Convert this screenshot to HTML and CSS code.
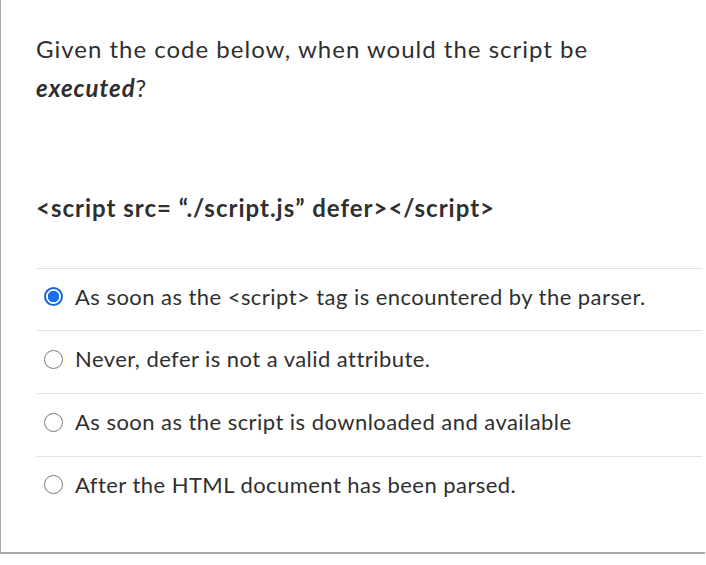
FILE: index.html
```html
<!DOCTYPE html>
<html>
<head>
<meta charset="utf-8">
<link rel="stylesheet" href="styles.css">
</head>
<body>
<div class="card">
  <p class="question">Given the code below, when would the script be <em class="strong-em">executed</em>?</p>
  <p class="code">&lt;script src= “./script.js” defer&gt;&lt;/script&gt;</p>
  <ul class="answers">
    <li class="answer"><span class="radio checked"></span><span class="label">As soon as the &lt;script&gt; tag is encountered by the parser.</span></li>
    <li class="answer"><span class="radio"></span><span class="label">Never, defer is not a valid attribute.</span></li>
    <li class="answer"><span class="radio"></span><span class="label">As soon as the script is downloaded and available</span></li>
    <li class="answer"><span class="radio"></span><span class="label">After the HTML document has been parsed.</span></li>
  </ul>
</div>
</body>
</html>
```

FILE: styles.css
```css
html, body {
  margin: 0;
  padding: 0;
  background: #fff;
}
body {
  font-family: Lato, "Liberation Sans", sans-serif;
  color: #2f2f2f;
}
.card {
  width: 705px;
  height: 554px;
  box-sizing: border-box;
  border-left: 1px solid #a8a8a8;
  border-bottom: 2px solid #a8a8a8;
  padding: 29px 3px 0 35px;
}
.question {
  margin: 0;
  font-size: 24px;
  letter-spacing: 1px;
  line-height: 39px;
  width: 600px;
}
.strong-em {
  font-style: italic;
  font-weight: 700;
}
.code {
  margin: 81px 0 0 0;
  font-size: 24px;
  letter-spacing: 1px;
  font-weight: 700;
  line-height: 39px;
}
.answers {
  list-style: none;
  margin: 41px 0 0 0;
  padding: 0;
}
.answer {
  display: flex;
  align-items: center;
  gap: 12px;
  height: 62px;
  border-top: 1px solid #e2e2e2;
  padding: 0 0 6px 8px;
  box-sizing: border-box;
}
.answer:nth-child(2), .answer:nth-child(3) {
  height: 63px;
}
.radio {
  width: 19px;
  height: 19px;
  box-sizing: border-box;
  border-radius: 50%;
  border: 1.5px solid #7a7a7a;
  flex: none;
  background: #fff;
}
.radio.checked {
  border: 2px solid #1667d8;
  background: radial-gradient(circle, #1a6ff0 0 5.5px, #fff 6px);
}
.label {
  font-size: 22px;
  letter-spacing: 0.45px;
  line-height: 26px;
}
```
